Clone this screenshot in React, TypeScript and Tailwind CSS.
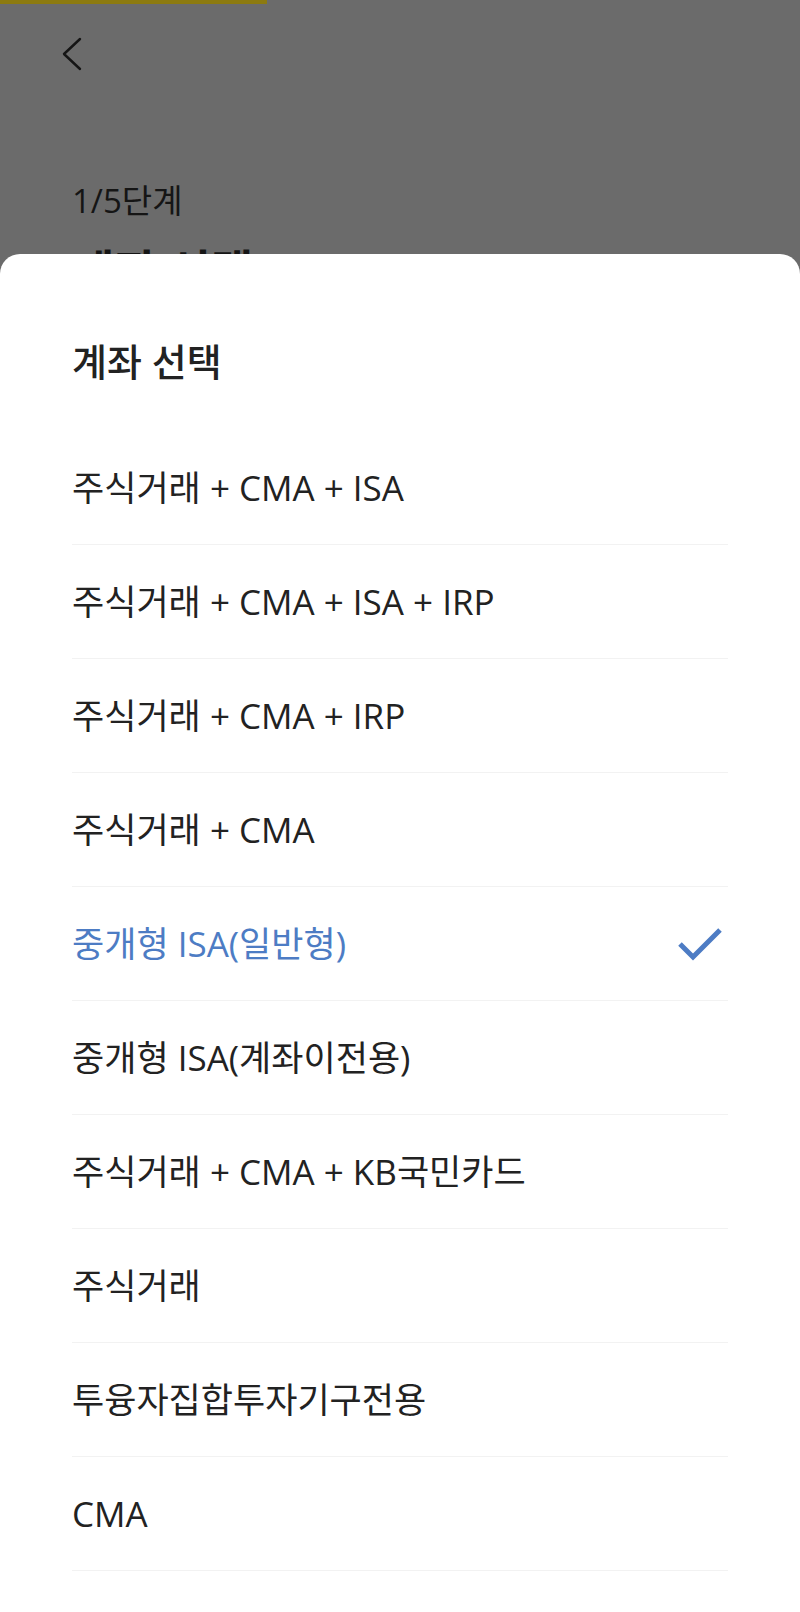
import React from "react";

const accounts = [
  "주식거래 + CMA + ISA",
  "주식거래 + CMA + ISA + IRP",
  "주식거래 + CMA + IRP",
  "주식거래 + CMA",
  "중개형 ISA(일반형)",
  "중개형 ISA(계좌이전용)",
  "주식거래 + CMA + KB국민카드",
  "주식거래",
  "투융자집합투자기구전용",
  "CMA",
];

const selected = 4;

const font = { fontFamily: '"Open Sans", "Noto Sans CJK KR", sans-serif' };

const App = () => {
  return (
    <div
      className="relative w-[800px] h-[1612px] overflow-hidden bg-[#6b6b6b]"
      style={font}
    >
      {/* dimmed page behind the sheet */}
      <div className="h-[4px] w-[267px] bg-[#8c7a10]" />
      <div className="pl-[60px] pt-[32px]">
        <svg width="24" height="36" viewBox="0 0 24 36" fill="none">
          <polyline
            points="20,3 4,18 20,33"
            stroke="#151515"
            strokeWidth="2.4"
            strokeLinecap="round"
            strokeLinejoin="round"
          />
        </svg>
      </div>
      <div className="pl-[72px] pt-[112px] text-[33px] leading-none text-[#151515]">
        1/5단계
      </div>
      <div className="pl-[72px] pt-[30px] text-[46px] font-bold leading-none text-[#151515]">
        계좌 선택
      </div>

      {/* bottom sheet */}
      <div className="absolute top-[254px] left-0 right-0 bottom-0 bg-white rounded-t-[20px]">
        <div className="h-[177px] px-[72px] pt-[88px]">
          <div className="text-[38px] leading-none font-medium text-[#222222]">
            계좌 선택
          </div>
        </div>
        <div className="px-[72px]">
          {accounts.map((name, i) => (
            <div
              key={name}
              className="h-[114px] flex items-center justify-between border-b border-[#f2f2f2]"
            >
              <span
                className={
                  i === selected
                    ? "text-[35px] leading-none text-[#4d7cc4]"
                    : "text-[35px] leading-none text-[#222222]"
                }
              >
                {name}
              </span>
              {i === selected && (
                <svg width="46" height="34" viewBox="0 0 46 34" fill="none" className="mr-[5px]">
                  <polyline
                    points="3,17 16,30 43,3"
                    stroke="#4d7cc4"
                    strokeWidth="5"
                    strokeLinecap="butt"
                    strokeLinejoin="miter"
                  />
                </svg>
              )}
            </div>
          ))}
        </div>
      </div>
    </div>
  );
};

export default App;
